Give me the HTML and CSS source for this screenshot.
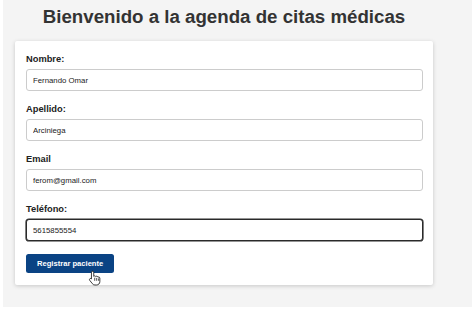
FILE: index.html
```html
<!DOCTYPE html>
<html lang="es">
<head>
<meta charset="utf-8">
<title>Agenda de citas médicas</title>
<link rel="stylesheet" href="styles.css">
</head>
<body>
<div class="page">
  <div class="container">
    <h1 class="title">Bienvenido a la agenda de citas médicas</h1>
    <form class="card">
      <div class="field">
        <label class="label">Nombre:</label>
        <input class="input" type="text" value="Fernando Omar">
      </div>
      <div class="field">
        <label class="label">Apellido:</label>
        <input class="input" type="text" value="Arciniega">
      </div>
      <div class="field">
        <label class="label">Email</label>
        <input class="input" type="text" value="ferom@gmail.com">
      </div>
      <div class="field">
        <label class="label">Teléfono:</label>
        <input class="input input-focus" type="text" value="5615855554">
      </div>
      <div class="actions">
        <button class="btn" type="button">Registrar paciente</button>
        <svg class="cursor" width="13" height="17" viewBox="0 0 17 22" aria-hidden="true">
          <path d="M6 1.5c.9 0 1.5.6 1.5 1.5v5.2c.3-.4.8-.6 1.3-.6.7 0 1.2.4 1.4 1 .3-.4.8-.6 1.3-.6.8 0 1.4.6 1.5 1.3.3-.2.6-.3 1-.3.9 0 1.5.7 1.5 1.6v4.4c0 2.6-1.8 4.5-4.4 4.5H9c-1.5 0-2.5-.6-3.4-1.8L2.2 13.3c-.5-.7-.4-1.6.3-2.1.6-.4 1.4-.3 1.9.3l.1.1V3c0-.9.6-1.5 1.5-1.5z" fill="#fff" stroke="#000" stroke-width="1" stroke-linejoin="round"/>
          <path d="M8.8 10.5v3M11.4 10.8v2.7M13.9 11.4v2.1" stroke="#000" stroke-width="0.9" stroke-linecap="round" fill="none"/>
        </svg>
      </div>
    </form>
  </div>
</div>
</body>
</html>
```

FILE: styles.css
```css
html, body {
  margin: 0;
  padding: 0;
  background: #ffffff;
}

.page {
  margin: 0 2px 0 3px;
  height: 307px;
  background: #f4f4f4;
  font-family: "Liberation Sans", Arial, sans-serif;
  overflow: hidden;
}

.container {
  width: 418px;
  margin-left: 12px;
  padding-top: 6px;
}

.title {
  margin: 0 0 13.5px 0;
  font-size: 18.7px;
  line-height: 21.5px;
  font-weight: bold;
  color: #333333;
  text-align: center;
}

.card {
  background: #ffffff;
  border-radius: 2px;
  box-shadow: 0 1px 4px rgba(0, 0, 0, 0.18);
  padding: 12.5px 10px 12px 11px;
  display: flex;
  flex-direction: column;
}

.field {
  display: flex;
  flex-direction: column;
  margin-bottom: 12.5px;
}

.label {
  font-size: 9.3px;
  line-height: 10.7px;
  font-weight: bold;
  color: #222222;
  margin-bottom: 4.8px;
}

.input {
  box-sizing: border-box;
  height: 22px;
  width: 100%;
  margin: 0;
  border: 1px solid #cccccc;
  border-radius: 3px;
  padding: 0 6px;
  font-family: "Liberation Sans", Arial, sans-serif;
  font-size: 7.8px;
  color: #222222;
  background: #ffffff;
  outline: none;
}

.input-focus {
  border-color: #2a2a2a;
  box-shadow: 0 0 0 0.6px #2a2a2a;
}

.actions {
  position: relative;
  display: flex;
}

.btn {
  height: 19.5px;
  padding: 0 11px;
  border: none;
  border-radius: 2.5px;
  background: #0a4384;
  color: #ffffff;
  font-family: "Liberation Sans", Arial, sans-serif;
  font-size: 7.6px;
  font-weight: bold;
  margin: 0;
}

.cursor {
  position: absolute;
  left: 62px;
  top: 16px;
}
```
